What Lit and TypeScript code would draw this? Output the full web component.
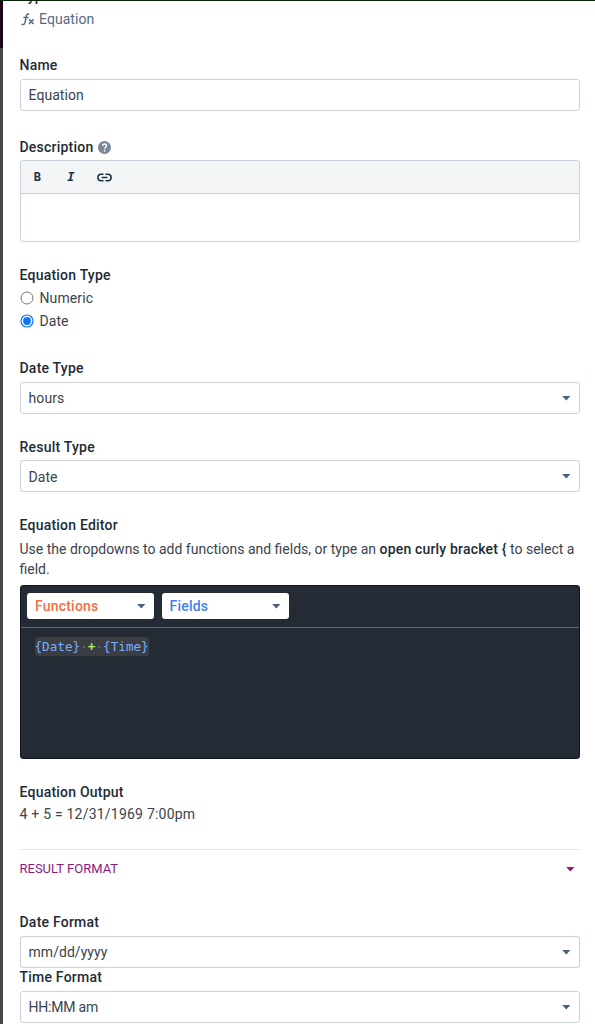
import { LitElement, html, css, svg } from "lit";
import { customElement, property } from "lit/decorators.js";

const caret = svg`<path d="M0.2 0h8.2L4.3 4.4z" fill="currentColor"/>`;

@customElement("select-box")
class SelectBox extends LitElement {
  @property() value = "";
  static styles = css`
    :host { display: flex; box-sizing: border-box; height: 32px; align-items: center; justify-content: space-between; border: 1px solid #cbd2da; border-radius: 3px; padding: 0 8.5px 0 8px; background: #fff; color: #3b434d; }
    svg { display: block; width: 9px; height: 5px; color: #4a607a; }
    .value { line-height: 20px; white-space: pre; }
  `;
  render() {
    return html`<span class="value">${this.value}</span><svg viewBox="0 0 9 5">${caret}</svg>`;
  }
}

@customElement("app-root")
class AppRoot extends LitElement {
  static styles = css`
    :host { display: block; height: 1024px; overflow: hidden; font: 400 14px/20px Roboto, sans-serif; letter-spacing: 0.05px; color: #3b434d; background: #fff; }
    .page { display: grid; grid-template-columns: 3px 1fr; grid-template-rows: 1px 1023px; }
    .top { grid-column: 1 / 3; background: #06260b; }
    .rail { background: linear-gradient(#1e0417 0 47px, #474747 47px); }
    .panel { padding: 0 15px 0 16.5px; overflow: hidden; background: #fff; }
    .label { height: 20px; font-weight: 500; letter-spacing: 0.22px; color: #222b36; white-space: nowrap; }
    .clipped { margin-top: -15px; }
    .kind { display: flex; align-items: center; gap: 4.5px; height: 20px; margin-top: 3px; color: #566b82; }
    .kind svg { width: 14px; height: 14px; margin-left: 1px; }
    .name { margin-top: 26px; }
    .input { box-sizing: border-box; height: 32px; margin-top: 4px; border: 1px solid #cbd2da; border-radius: 3px; padding: 5px 8px; }
    .desc { display: flex; align-items: center; gap: 5px; margin-top: 26px; }
    .desc svg { width: 13px; height: 13px; }
    .rich { box-sizing: border-box; height: 82px; margin-top: 3px; border: 1px solid #cbd2da; border-radius: 3px; overflow: hidden; }
    .tools { display: flex; align-items: center; height: 32px; background: #f3f5f7; border-bottom: 1px solid #cbd2da; color: #1d3048; font: 700 12px/16px "DejaVu Sans Mono", monospace; letter-spacing: 0; }
    .tools span { width: 33.5px; text-align: center; }
    .tools i { display: block; }
    .tools svg { width: 15px; height: 9px; margin-left: 9px; }
    .etype { margin-top: 23px; }
    .radio { display: flex; align-items: center; gap: 6px; height: 20px; margin-top: 3px; }
    .numeric { letter-spacing: 0.1px; }
    .radio svg { width: 14px; height: 14px; }
    .radio + .radio { margin-top: 3px; }
    .dtype { margin-top: 27px; }
    .dtype + select-box { margin-top: 4px; }
    .rtype { margin-top: 23px; }
    .rtype + select-box { margin-top: 3px; height: 32px; padding-top: 1px; }
    .hours { letter-spacing: 0.1px; }
    .clock { letter-spacing: -0.2px; }
    .elabel { margin-top: 23px; }
    .help { margin-top: 5px; line-height: 19.5px; height: 39px; white-space: nowrap; letter-spacing: 0; }
    .help b { font-weight: 500; color: #222b36; letter-spacing: 0.18px; }
    .editor { box-sizing: border-box; height: 174px; margin-top: 6px; border: 1px solid #101923; border-radius: 3px; background: #242b34; overflow: hidden; }
    .bar { display: flex; gap: 7.5px; padding: 7px 7px 8px 6.5px; height: 26px; border-bottom: 1px solid #557285; }
    .fn { --c: #f36f43; }
    .fd { --c: #437ff0; }
    .drop { box-sizing: border-box; display: flex; align-items: center; justify-content: space-between; width: 127px; height: 26px; background: #fff; border-radius: 3px; padding: 0 8px; font-weight: 500; letter-spacing: 0.2px; color: var(--c); }
    .drop svg { width: 9px; height: 5px; color: #4a607a; }
    .code { padding: 8px 14px; }
    .token { display: inline-block; height: 19px; background: #3a3e43; border-radius: 3px; font: 12.65px/19px "DejaVu Sans Mono", monospace; letter-spacing: 0; color: #78aeff; white-space: pre; }
    .dot { color: #626b70; }
    .plus { color: #b3e965; font-weight: 700; }
    .out { margin-top: 22.5px; }
    .result { height: 20px; margin-top: 2.5px; letter-spacing: 0.22px; }
    .section { display: flex; align-items: center; justify-content: space-between; height: 38px; margin-top: 25px; border-top: 1px solid #e3e5e8; padding-right: 5px; color: #8d1a7d; font-size: 13px; letter-spacing: 0; }
    .section svg { width: 9px; height: 5px; }
    .dformat { margin-top: 24px; }
    .dformat + select-box { margin-top: 4px; }
    .tformat { margin-top: -1px; }
    .tformat + select-box { margin-top: 4px; }
  `;

  render() {
    return html`<div class="page">
      <div class="top"></div>
      <div class="rail"></div>
      <main class="panel">
        <div class="label clipped">Type</div>
        <div class="kind">
          <svg viewBox="0 0 14 14" fill="none" stroke="currentColor" stroke-width="1.5"><path d="M8.3 2.2C6.8 1.5 5.8 2 5.4 3.9L4 10.7C3.6 12.6 2.4 12.9.6 12.2M2.4 5.4h5M8 7.4l4.6 4.6M12.6 7.4l-4.6 4.6"/></svg>
          <span>Equation</span>
        </div>
        <div class="label name">Name</div>
        <div class="input">Equation</div>
        <div class="label desc">Description
          <svg viewBox="0 0 14 14"><circle cx="7" cy="7" r="7" fill="#758799"/><path d="M4.9 5.4C5 3.9 5.8 3.3 7 3.3c1.3 0 2.2.8 2.2 1.9C9.2 6.7 7.1 6.7 7.1 8.4" fill="none" stroke="#fff" stroke-width="1.5"/><circle cx="7.1" cy="10.4" r="1" fill="#fff"/></svg>
        </div>
        <div class="rich">
          <div class="tools"><span>B</span><span><i>I</i></span>
            <svg viewBox="0 0 15 9" fill="none" stroke="currentColor" stroke-width="1.6"><path d="M6.5 1.2H4.2a3.3 3.3 0 0 0 0 6.6h2.3M8.5 1.2h2.3a3.3 3.3 0 0 1 0 6.6H8.5M4.6 4.5h5.8"/></svg>
          </div>
        </div>
        <div class="label etype">Equation Type</div>
        <div class="radio numeric"><svg viewBox="0 0 14 14"><circle cx="7" cy="7" r="6" fill="#fff" stroke="#767676"/></svg>Numeric</div>
        <div class="radio"><svg viewBox="0 0 14 14"><circle cx="7" cy="7" r="6" fill="#fff" stroke="#0b75ff" stroke-width="1.2"/><circle cx="7" cy="7" r="3.9" fill="#0b75ff"/></svg>Date</div>
        <div class="label dtype">Date Type</div>
        <select-box class="hours" value="hours"></select-box>
        <div class="label rtype">Result Type</div>
        <select-box value="Date"></select-box>
        <div class="label elabel">Equation Editor</div>
        <div class="help">Use the dropdowns to add functions and fields, or type an <b>open curly bracket {</b> to select a<br>field.</div>
        <div class="editor">
          <div class="bar">
            <div class="drop fn">Functions<svg viewBox="0 0 9 5">${caret}</svg></div>
            <div class="drop fd">Fields<svg viewBox="0 0 9 5">${caret}</svg></div>
          </div>
          <div class="code"><span class="token">{Date}<span class="dot">·</span><span class="plus">+</span><span class="dot">·</span>{Time}</span></div>
        </div>
        <div class="label out">Equation Output</div>
        <div class="result">4 + 5 = 12/31/1969 7:00pm</div>
        <div class="section">RESULT FORMAT<svg viewBox="0 0 9 5">${caret}</svg></div>
        <div class="label dformat">Date Format</div>
        <select-box value="mm/dd/yyyy"></select-box>
        <div class="label tformat">Time Format</div>
        <select-box class="clock" value="HH:MM am"></select-box>
      </main>
    </div>`;
  }
}
